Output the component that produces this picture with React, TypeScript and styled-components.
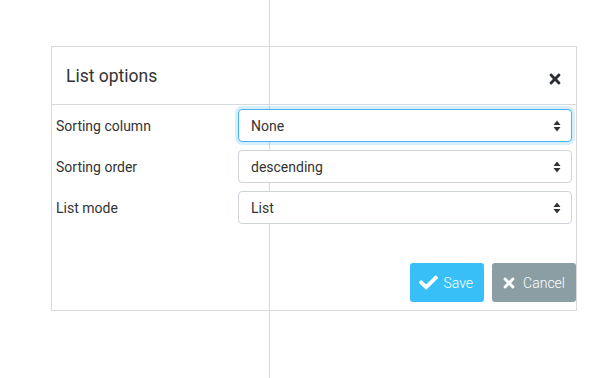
import styled, { createGlobalStyle } from "styled-components";
import { FaCheck, FaTimes } from "react-icons/fa";

const GlobalStyle = createGlobalStyle`
  html, body {
    margin: 0;
    padding: 0;
    background: #fff;
    font-family: Roboto, "Liberation Sans", Arial, sans-serif;
    color: #333;
  }
  * { box-sizing: border-box; }
`;

interface Option {
  label: string;
  value: string;
  focused?: boolean;
}

const options: Option[] = [
  { label: "Sorting column", value: "None", focused: true },
  { label: "Sorting order", value: "descending" },
  { label: "List mode", value: "List" },
];

export default function App() {
  return (
    <>
      <GlobalStyle />
      <Page>
        <LeftColumn />
        <RightColumn />
        <Modal>
          <ModalHeader>
            <ModalTitle>List options</ModalTitle>
            <CloseButton>
              <FaTimes size={16} />
            </CloseButton>
          </ModalHeader>
          <ModalBody>
            {options.map((o) => (
              <FormRow key={o.label}>
                <FieldLabel>{o.label}</FieldLabel>
                <SelectBox $focused={o.focused}>
                  <span>{o.value}</span>
                  <SortArrows viewBox="0 0 8 12" width="8" height="12">
                    <path d="M4 0.5 L7.5 5 H0.5 Z" fill="#333" />
                    <path d="M4 11.5 L7.5 7 H0.5 Z" fill="#333" />
                  </SortArrows>
                </SelectBox>
              </FormRow>
            ))}
          </ModalBody>
          <ModalFooter>
            <ActionButton $color="#38bff7">
              <FaCheck size={19} />
              Save
            </ActionButton>
            <ActionButton $color="#8a9ea3">
              <FaTimes size={16} />
              Cancel
            </ActionButton>
          </ModalFooter>
        </Modal>
      </Page>
    </>
  );
}

const Page = styled.div`
  position: relative;
  display: grid;
  grid-template-columns: 270px 1fr;
  width: 100%;
  height: 100vh;
`;
const LeftColumn = styled.div`
  border-right: 1px solid #d6dadd;
`;
const RightColumn = styled.div``;
const Modal = styled.section`
  position: absolute;
  left: 51px;
  top: 46px;
  width: 526px;
  height: 265px;
  display: flex;
  flex-direction: column;
  border: 1px solid #d6dadd;
  background: transparent;
`;
const ModalHeader = styled.header`
  display: flex;
  align-items: center;
  justify-content: space-between;
  height: 58px;
  padding: 0 13px 0 14px;
  border-bottom: 1px solid #d6dadd;
`;
const ModalTitle = styled.h1`
  margin: 0;
  font-size: 17.5px;
  font-weight: 400;
  color: #333;
`;
const CloseButton = styled.button`
  display: flex;
  align-items: center;
  padding: 0;
  margin-top: 6px;
  border: none;
  background: transparent;
  color: #2b2f33;
  cursor: pointer;
`;
const ModalBody = styled.div`
  display: flex;
  flex-direction: column;
  gap: 8px;
  padding: 4px 4px 0 4px;
`;
const FormRow = styled.div`
  display: flex;
  align-items: center;
`;
const FieldLabel = styled.label`
  width: 182px;
  font-size: 14px;
  color: #333;
`;
const SelectBox = styled.div<{ $focused?: boolean }>`
  position: relative;
  display: flex;
  align-items: center;
  justify-content: space-between;
  width: 334px;
  height: 33px;
  padding: 0 10px 0 12px;
  font-size: 14px;
  color: #333;
  background: #fff;
  border: 1px solid ${(p) => (p.$focused ? "#47b2ee" : "#ced4da")};
  border-radius: 4px;
  box-shadow: ${(p) => (p.$focused ? "0 0 0 3px rgba(71, 178, 238, 0.22)" : "none")};
`;
const SortArrows = styled.svg`
  display: block;
`;
const ModalFooter = styled.footer`
  display: flex;
  justify-content: flex-end;
  gap: 8px;
  margin-top: 39px;
`;
const ActionButton = styled.button<{ $color: string }>`
  display: flex;
  align-items: center;
  gap: 6px;
  height: 39px;
  padding: 0 11px 0 9px;
  font-family: Roboto, "Liberation Sans", Arial, sans-serif;
  font-size: 14px;
  font-weight: 300;
  color: #fff;
  background: ${(p) => p.$color};
  border: none;
  border-radius: 3px;
  cursor: pointer;
`;
